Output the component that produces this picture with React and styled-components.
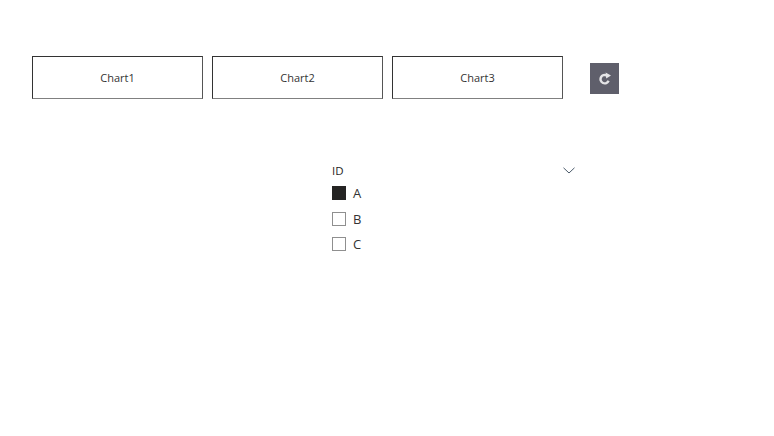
import styled, { createGlobalStyle } from "styled-components";

const GlobalStyle = createGlobalStyle`
  html, body {
    margin: 0;
    background: #fff;
    font-family: "Open Sans", "Noto Sans", "Liberation Sans", sans-serif;
    color: #252423;
  }
`;

const Page = styled.div`
  width: 774px;
  height: 436px;
  overflow: hidden;
  padding: 56px 0 0 32px;
  box-sizing: border-box;
`;

const Toolbar = styled.div`
  display: flex;
  align-items: flex-start;
  gap: 9px;
`;

const ChartButton = styled.button`
  width: 171px;
  height: 43px;
  padding: 0;
  background: #fff;
  border: 1px solid #333;
  border-bottom-color: #808080;
  border-right-color: #555;
  font: inherit;
  font-size: 11px;
  color: #333;
`;

const RefreshButton = styled.button`
  width: 29px;
  height: 31px;
  margin: 7px 0 0 18px;
  padding: 0;
  border: 0;
  background: #5f5f6b;
  display: flex;
  align-items: center;
  justify-content: center;
`;

const Slicer = styled.div`
  width: 243px;
  margin: 63px 0 0 300px;
`;

const SlicerHeader = styled.div`
  display: flex;
  align-items: center;
  justify-content: space-between;
  height: 16px;
  font-size: 11.5px;
  color: #252423;
`;

const List = styled.div`
  display: flex;
  flex-direction: column;
  gap: 11.5px;
  margin-top: 8px;
`;

const Row = styled.div`
  display: flex;
  align-items: center;
  gap: 7px;
  height: 14px;
  font-size: 13px;
  color: #333;
`;

const Box = styled.span`
  width: 14px;
  height: 14px;
  box-sizing: border-box;
  border: 1px solid ${(p) => (p.$checked ? "#252423" : "#8f8f8f")};
  background: ${(p) => (p.$checked ? "#252423" : "#fff")};
`;

const ITEMS = [
  { name: "A", checked: true },
  { name: "B", checked: false },
  { name: "C", checked: false },
];

const App = () => {
  return (
    <Page>
      <GlobalStyle />
      <Toolbar>
        <ChartButton>Chart1</ChartButton>
        <ChartButton>Chart2</ChartButton>
        <ChartButton>Chart3</ChartButton>
        <RefreshButton>
          <svg width="14" height="13" viewBox="0 0 14 13" fill="none">
            <path d="M10.6 8.8A4.2 4.2 0 1 1 8.6 3.4" stroke="#e4e4e6" strokeWidth="2.4" />
            <path d="M7.6 0.6 L13 3.4 L8.2 6.6 Z" fill="#e4e4e6" />
          </svg>
        </RefreshButton>
      </Toolbar>
      <Slicer>
        <SlicerHeader>
          ID
          <svg width="12" height="7" viewBox="0 0 12 7" fill="none">
            <path d="M0.5 0.8 L6 6 L11.5 0.8" stroke="#4a5a6a" strokeWidth="1" />
          </svg>
        </SlicerHeader>
        <List>
          {ITEMS.map((item) => (
            <Row key={item.name}>
              <Box $checked={item.checked} />
              {item.name}
            </Row>
          ))}
        </List>
      </Slicer>
    </Page>
  );
};

export default App;
